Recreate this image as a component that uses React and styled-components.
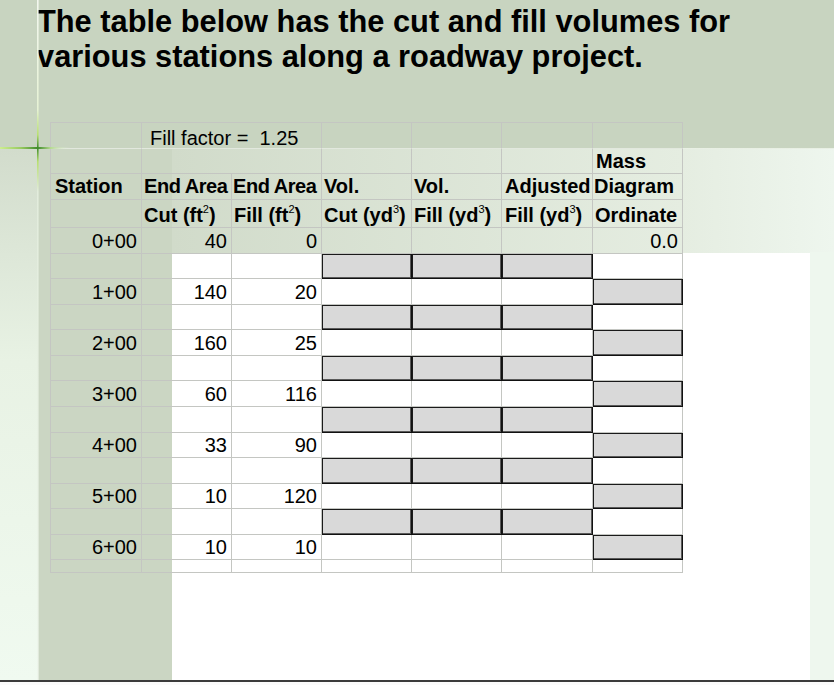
import React from "react";
import styled, { createGlobalStyle, css } from "styled-components";

const GlobalStyle = createGlobalStyle`
  html, body { margin: 0; padding: 0; background: #fff; }
  body { font-family: "Liberation Sans", Arial, sans-serif; color: #000; }
`;

const SAGE = "#c8d4c0";

const Slide = styled.div`
  position: relative;
  box-sizing: border-box;
  width: 834px;
  height: 685px;
  overflow: hidden;
  padding: 4px 0 0 37px;
  background:
    linear-gradient(#3b3b3b, #3b3b3b) 0 680px / 100% 2px no-repeat,
    linear-gradient(#fbfbfb, #fbfbfb) 0 682px / 100% 3px no-repeat,
    linear-gradient(90deg, rgba(236, 242, 232, 0) 0, rgba(236, 242, 232, 0.9) 60px) 0 148px / 100% 1px no-repeat,
    linear-gradient(#ffffff, #ffffff) 172px 253px / 638px 427px no-repeat,
    linear-gradient(#eef7ee, #eef7ee) 810px 252px / 24px 428px no-repeat,
    linear-gradient(90deg, #d1dbca 0%, #e5ede1 77%, #eef6ee 100%) 172px 149px / 662px 104px no-repeat,
    linear-gradient(#cbd6c3, #cbd6c3) 38px 149px / 134px 531px no-repeat,
    linear-gradient(180deg, #d2dccc 0%, #e8f2e4 40%, #f0faf0 100%) 0 149px / 38px 531px no-repeat,
    linear-gradient(${SAGE}, ${SAGE}) 0 0 / 100% 149px no-repeat;
`;

const Cross = styled.svg`
  position: absolute;
  left: 0;
  top: 0;
  pointer-events: none;
`;

const Title = styled.h1`
  margin: 0;
  font-family: "Liberation Sans", Arial, sans-serif;
  font-weight: 700;
  font-size: 30.8px;
  line-height: 35px;
  color: #000;
`;

const Grid = styled.div`
  display: grid;
  grid-template-columns: 91px 90px 90px 90px 90px 91px 90px;
  grid-template-rows: ${(p) => p.$rows};
  width: max-content;
  margin: 48px 0 0 13px;
  border-top: 1px solid #c4c6c2;
  border-left: 1px solid #c4c6c2;
`;

const Cell = styled.div`
  box-sizing: border-box;
  min-width: 0;
  display: flex;
  align-items: flex-end;
  justify-content: ${(p) => (p.$right ? "flex-end" : "flex-start")};
  padding: 0 4px ${(p) => p.$pb}px ${(p) => p.$pl}px;
  border-right: 1px solid #c4c6c2;
  border-bottom: 1px solid ${(p) => (p.$lightBottom ? "#e2e8de" : "#c4c6c2")};
  ${(p) => p.$span && css`grid-column: span ${p.$span};`}
  ${(p) =>
    p.$box &&
    css`
      background: #d9d9d9;
      border-right-color: #111;
      border-bottom-color: #111;
      box-shadow: inset 1px 1px 0 #1a1a1a, inset -1px -1px 0 #5a5a5a;
    `}
`;

const Label = styled.span`
  display: block;
  font-family: "Liberation Sans", Arial, sans-serif;
  font-size: 20px;
  line-height: 20px;
  font-weight: ${(p) => (p.$bold ? 700 : 400)};
  letter-spacing: ${(p) => (p.$tight ? "-0.45px" : "0")};
  color: #000;
  white-space: pre;
`;

const Sup = styled.sup`
  font-size: 11px;
  font-weight: 400;
  line-height: 0;
  vertical-align: 9px;
  margin-left: 0;
`;

const T = (text, o = {}) => ({ text, ...o });
const E = () => T("");

const header = [
  {
    h: 26,
    light: true,
    cells: [E(), T("Fill factor =  1.25", { span: 2, pl: 8, pb: 0 }), E(), E(), E(), E()],
  },
  {
    h: 25,
    cells: [E(), T("", { span: 2 }), E(), E(), E(), T("Mass", { bold: true, pl: 3 })],
  },
  {
    h: 26,
    cells: [
      T("Station", { bold: true, pb: 3 }),
      T("End Area", { bold: true, pl: 2, pb: 3, tight: true }),
      T("End Area", { bold: true, pl: 1, pb: 3, tight: true }),
      T("Vol.", { bold: true, pl: 2, pb: 3 }),
      T("Vol.", { bold: true, pl: 2, pb: 3 }),
      T("Adjusted", { bold: true, pl: 3, pb: 3 }),
      T("Diagram", { bold: true, pl: 1, pb: 3 }),
    ],
  },
  {
    h: 28,
    cells: [
      E(),
      T(<>Cut (ft<Sup>2</Sup>)</>, { bold: true, pl: 2 }),
      T(<>Fill (ft<Sup>2</Sup>)</>, { bold: true, pl: 2 }),
      T(<>Cut (yd<Sup>3</Sup>)</>, { bold: true, pl: 2 }),
      T(<>Fill (yd<Sup>3</Sup>)</>, { bold: true, pl: 2 }),
      T(<>Fill (yd<Sup>3</Sup>)</>, { bold: true, pl: 3 }),
      T("Ordinate", { bold: true, pl: 2 }),
    ],
  },
  {
    h: 26,
    cells: [
      T("0+00", { right: true }),
      T("40", { right: true }),
      T("0", { right: true }),
      E(),
      E(),
      E(),
      T("0.0", { right: true }),
    ],
  },
];

const stations = [
  ["1+00", "140", "20"],
  ["2+00", "160", "25"],
  ["3+00", "60", "116"],
  ["4+00", "33", "90"],
  ["5+00", "10", "120"],
  ["6+00", "10", "10"],
];
const pairHeights = [
  [25, 26],
  [25, 26],
  [25, 26],
  [26, 25],
  [26, 25],
  [26, 25],
];

const body = [];
stations.forEach(([st, cut, fill], i) => {
  body.push({
    h: pairHeights[i][0],
    cells: [E(), E(), E(), T("", { box: true }), T("", { box: true }), T("", { box: true }), E()],
  });
  body.push({
    h: pairHeights[i][1],
    cells: [
      T(st, { right: true }),
      T(cut, { right: true }),
      T(fill, { right: true }),
      E(),
      E(),
      E(),
      T("", { box: true }),
    ],
  });
});
body.push({ h: 13, cells: [E(), E(), E(), E(), E(), E(), E()] });

const rows = [...header, ...body];

export default function App() {
  return (
    <>
      <GlobalStyle />
      <Slide>
        <Title>
          The table below has the cut and fill volumes for
          <br />
          various stations along a roadway project.
        </Title>
        <Grid $rows={rows.map((r) => `${r.h}px`).join(" ")}>
          {rows.map((r, ri) =>
            r.cells.map((c, ci) => (
              <Cell
                key={`${ri}-${ci}`}
                $span={c.span}
                $right={c.right}
                $box={c.box}
                $pl={c.pl ?? 4}
                $pb={c.pb ?? 2}
                $lightBottom={r.light}
              >
                {c.text !== "" && (
                  <Label $bold={c.bold} $tight={c.tight}>
                    {c.text}
                  </Label>
                )}
              </Cell>
            ))
          )}
        </Grid>
        <Cross width="70" height="685" viewBox="0 0 70 685">
          <defs>
            <linearGradient id="cv" x1="0" y1="0" x2="0" y2="685" gradientUnits="userSpaceOnUse">
              <stop offset="0" stopColor="#f3f7ef" />
              <stop offset="0.16" stopColor="#e6f2d4" />
              <stop offset="0.197" stopColor="#b8e070" />
              <stop offset="0.216" stopColor="#3f8a2a" />
              <stop offset="0.236" stopColor="#b8e070" />
              <stop offset="0.28" stopColor="#e2ecdc" />
              <stop offset="1" stopColor="#eef6ec" />
            </linearGradient>
            <linearGradient id="ch" x1="0" y1="0" x2="70" y2="0" gradientUnits="userSpaceOnUse">
              <stop offset="0" stopColor="#cdee90" />
              <stop offset="0.3" stopColor="#98ca60" />
              <stop offset="0.54" stopColor="#3f8a2a" />
              <stop offset="0.72" stopColor="#b4da8e" />
              <stop offset="1" stopColor="#e8f0e4" stopOpacity="0" />
            </linearGradient>
          </defs>
          <rect x="37" y="0" width="1.6" height="680" fill="url(#cv)" />
          <rect x="0" y="147" width="70" height="2" fill="url(#ch)" />
        </Cross>
      </Slide>
    </>
  );
}
